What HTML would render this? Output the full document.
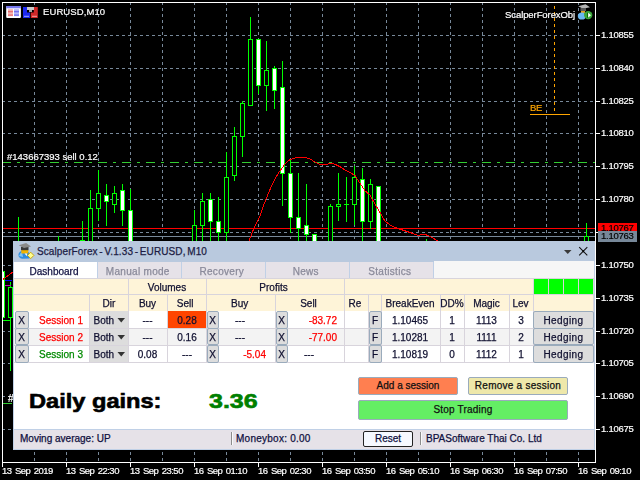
<!DOCTYPE html>
<html><head><meta charset="utf-8">
<style>
html,body{margin:0;padding:0;background:#000;width:640px;height:480px;overflow:hidden;}
body{position:relative;font-family:"Liberation Sans",sans-serif;}
svg{position:absolute;left:0;top:0;}
.ct{position:absolute;white-space:nowrap;line-height:12px;will-change:transform;-webkit-text-stroke:0.2px currentColor;}
.p{position:absolute;}
.tx{position:absolute;white-space:nowrap;font-size:10px;line-height:12px;color:#101030;-webkit-text-stroke:0.25px currentColor;}
</style></head><body>
<svg width="640" height="480" viewBox="0 0 640 480" shape-rendering="crispEdges">
<defs><clipPath id="cc"><rect x="3" y="3" width="592" height="459"/></clipPath></defs><g clip-path="url(#cc)">
<line x1="2" y1="35.5" x2="595" y2="35.5" stroke="#778899" stroke-width="1" stroke-dasharray="3 3"/>
<line x1="2" y1="68.5" x2="595" y2="68.5" stroke="#778899" stroke-width="1" stroke-dasharray="3 3"/>
<line x1="2" y1="101.5" x2="595" y2="101.5" stroke="#778899" stroke-width="1" stroke-dasharray="3 3"/>
<line x1="2" y1="133.5" x2="595" y2="133.5" stroke="#778899" stroke-width="1" stroke-dasharray="3 3"/>
<line x1="2" y1="166.5" x2="595" y2="166.5" stroke="#778899" stroke-width="1" stroke-dasharray="3 3"/>
<line x1="2" y1="199.5" x2="595" y2="199.5" stroke="#778899" stroke-width="1" stroke-dasharray="3 3"/>
<line x1="2" y1="232.5" x2="595" y2="232.5" stroke="#778899" stroke-width="1" stroke-dasharray="3 3"/>
<line x1="2" y1="265.5" x2="595" y2="265.5" stroke="#778899" stroke-width="1" stroke-dasharray="3 3"/>
<line x1="2" y1="298.5" x2="595" y2="298.5" stroke="#778899" stroke-width="1" stroke-dasharray="3 3"/>
<line x1="2" y1="331.5" x2="595" y2="331.5" stroke="#778899" stroke-width="1" stroke-dasharray="3 3"/>
<line x1="2" y1="363.5" x2="595" y2="363.5" stroke="#778899" stroke-width="1" stroke-dasharray="3 3"/>
<line x1="2" y1="396.5" x2="595" y2="396.5" stroke="#778899" stroke-width="1" stroke-dasharray="3 3"/>
<line x1="2" y1="429.5" x2="595" y2="429.5" stroke="#778899" stroke-width="1" stroke-dasharray="3 3"/>
<line x1="34.5" y1="2" x2="34.5" y2="462" stroke="#778899" stroke-width="1" stroke-dasharray="3 3"/>
<line x1="66.5" y1="2" x2="66.5" y2="462" stroke="#778899" stroke-width="1" stroke-dasharray="3 3"/>
<line x1="98.5" y1="2" x2="98.5" y2="462" stroke="#778899" stroke-width="1" stroke-dasharray="3 3"/>
<line x1="130.5" y1="2" x2="130.5" y2="462" stroke="#778899" stroke-width="1" stroke-dasharray="3 3"/>
<line x1="162.5" y1="2" x2="162.5" y2="462" stroke="#778899" stroke-width="1" stroke-dasharray="3 3"/>
<line x1="194.5" y1="2" x2="194.5" y2="462" stroke="#778899" stroke-width="1" stroke-dasharray="3 3"/>
<line x1="226.5" y1="2" x2="226.5" y2="462" stroke="#778899" stroke-width="1" stroke-dasharray="3 3"/>
<line x1="258.5" y1="2" x2="258.5" y2="462" stroke="#778899" stroke-width="1" stroke-dasharray="3 3"/>
<line x1="290.5" y1="2" x2="290.5" y2="462" stroke="#778899" stroke-width="1" stroke-dasharray="3 3"/>
<line x1="322.5" y1="2" x2="322.5" y2="462" stroke="#778899" stroke-width="1" stroke-dasharray="3 3"/>
<line x1="354.5" y1="2" x2="354.5" y2="462" stroke="#778899" stroke-width="1" stroke-dasharray="3 3"/>
<line x1="386.5" y1="2" x2="386.5" y2="462" stroke="#778899" stroke-width="1" stroke-dasharray="3 3"/>
<line x1="418.5" y1="2" x2="418.5" y2="462" stroke="#778899" stroke-width="1" stroke-dasharray="3 3"/>
<line x1="450.5" y1="2" x2="450.5" y2="462" stroke="#778899" stroke-width="1" stroke-dasharray="3 3"/>
<line x1="482.5" y1="2" x2="482.5" y2="462" stroke="#778899" stroke-width="1" stroke-dasharray="3 3"/>
<line x1="514.5" y1="2" x2="514.5" y2="462" stroke="#778899" stroke-width="1" stroke-dasharray="3 3"/>
<line x1="546.5" y1="2" x2="546.5" y2="462" stroke="#778899" stroke-width="1" stroke-dasharray="3 3"/>
<line x1="578.5" y1="2" x2="578.5" y2="462" stroke="#778899" stroke-width="1" stroke-dasharray="3 3"/>
<rect x="3" y="228" width="592" height="1" fill="#ff0000"/>
<rect x="3" y="236" width="592" height="1" fill="#778899"/>
<line x1="2" y1="162.5" x2="595" y2="162.5" stroke="#32cd32" stroke-width="1" stroke-dasharray="9 6 3 6"/>
<rect x="3" y="403" width="9" height="1" fill="#32cd32"/>
<rect x="530" y="114" width="40" height="1" fill="#ffa500"/>
<line x1="554.5" y1="6" x2="554.5" y2="111" stroke="#ffa500" stroke-width="1" stroke-dasharray="3 3"/>
<rect x="2" y="271" width="1" height="47" fill="#00ff00"/>
<rect x="0" y="271" width="5" height="47" fill="#00ff00"/>
<rect x="1" y="272" width="3" height="45" fill="#ffffff"/>
<rect x="10" y="282" width="1" height="89" fill="#00ff00"/>
<rect x="8" y="287" width="5" height="31" fill="#00ff00"/>
<rect x="9" y="288" width="3" height="29" fill="#000000"/>
<rect x="18" y="217" width="1" height="83" fill="#00ff00"/>
<rect x="58" y="236" width="1" height="64" fill="#00ff00"/>
<rect x="82" y="221" width="1" height="80" fill="#00ff00"/>
<rect x="80" y="240" width="5" height="61" fill="#00ff00"/>
<rect x="81" y="241" width="3" height="59" fill="#000000"/>
<rect x="90" y="190" width="1" height="111" fill="#00ff00"/>
<rect x="88" y="208" width="5" height="93" fill="#00ff00"/>
<rect x="89" y="209" width="3" height="91" fill="#000000"/>
<rect x="98" y="170" width="1" height="51" fill="#00ff00"/>
<rect x="96" y="193" width="5" height="16" fill="#00ff00"/>
<rect x="97" y="194" width="3" height="14" fill="#000000"/>
<rect x="106" y="184" width="1" height="42" fill="#00ff00"/>
<rect x="104" y="195" width="5" height="7" fill="#00ff00"/>
<rect x="105" y="196" width="3" height="5" fill="#ffffff"/>
<rect x="114" y="186" width="1" height="27" fill="#00ff00"/>
<rect x="112" y="193" width="5" height="12" fill="#00ff00"/>
<rect x="113" y="194" width="3" height="10" fill="#000000"/>
<rect x="122" y="184" width="1" height="42" fill="#00ff00"/>
<rect x="120" y="190" width="5" height="21" fill="#00ff00"/>
<rect x="121" y="191" width="3" height="19" fill="#ffffff"/>
<rect x="130" y="189" width="1" height="112" fill="#00ff00"/>
<rect x="128" y="210" width="5" height="91" fill="#00ff00"/>
<rect x="129" y="211" width="3" height="89" fill="#ffffff"/>
<rect x="194" y="210" width="1" height="91" fill="#00ff00"/>
<rect x="192" y="225" width="5" height="76" fill="#00ff00"/>
<rect x="193" y="226" width="3" height="74" fill="#000000"/>
<rect x="202" y="193" width="1" height="108" fill="#00ff00"/>
<rect x="200" y="201" width="5" height="25" fill="#00ff00"/>
<rect x="201" y="202" width="3" height="23" fill="#000000"/>
<rect x="210" y="193" width="1" height="108" fill="#00ff00"/>
<rect x="208" y="199" width="5" height="23" fill="#00ff00"/>
<rect x="209" y="200" width="3" height="21" fill="#ffffff"/>
<rect x="218" y="197" width="1" height="104" fill="#00ff00"/>
<rect x="216" y="221" width="5" height="12" fill="#00ff00"/>
<rect x="217" y="222" width="3" height="10" fill="#ffffff"/>
<rect x="226" y="152" width="1" height="149" fill="#00ff00"/>
<rect x="224" y="177" width="5" height="56" fill="#00ff00"/>
<rect x="225" y="178" width="3" height="54" fill="#000000"/>
<rect x="234" y="127" width="1" height="54" fill="#00ff00"/>
<rect x="232" y="136" width="5" height="40" fill="#00ff00"/>
<rect x="233" y="137" width="3" height="38" fill="#000000"/>
<rect x="242" y="101" width="1" height="56" fill="#00ff00"/>
<rect x="240" y="103" width="5" height="34" fill="#00ff00"/>
<rect x="241" y="104" width="3" height="32" fill="#000000"/>
<rect x="250" y="17" width="1" height="89" fill="#00ff00"/>
<rect x="248" y="39" width="5" height="67" fill="#00ff00"/>
<rect x="249" y="40" width="3" height="65" fill="#000000"/>
<rect x="258" y="39" width="1" height="55" fill="#00ff00"/>
<rect x="256" y="39" width="5" height="47" fill="#00ff00"/>
<rect x="257" y="40" width="3" height="45" fill="#ffffff"/>
<rect x="266" y="41" width="1" height="70" fill="#00ff00"/>
<rect x="264" y="70" width="5" height="16" fill="#00ff00"/>
<rect x="265" y="71" width="3" height="14" fill="#000000"/>
<rect x="274" y="66" width="1" height="43" fill="#00ff00"/>
<rect x="272" y="68" width="5" height="23" fill="#00ff00"/>
<rect x="273" y="69" width="3" height="21" fill="#ffffff"/>
<rect x="282" y="61" width="1" height="145" fill="#00ff00"/>
<rect x="280" y="87" width="5" height="87" fill="#00ff00"/>
<rect x="281" y="88" width="3" height="85" fill="#ffffff"/>
<rect x="290" y="160" width="1" height="73" fill="#00ff00"/>
<rect x="288" y="173" width="5" height="45" fill="#00ff00"/>
<rect x="289" y="174" width="3" height="43" fill="#ffffff"/>
<rect x="298" y="173" width="1" height="128" fill="#00ff00"/>
<rect x="296" y="217" width="5" height="12" fill="#00ff00"/>
<rect x="297" y="218" width="3" height="10" fill="#ffffff"/>
<rect x="306" y="184" width="1" height="117" fill="#00ff00"/>
<rect x="304" y="225" width="5" height="10" fill="#00ff00"/>
<rect x="305" y="226" width="3" height="8" fill="#ffffff"/>
<rect x="314" y="234" width="1" height="67" fill="#00ff00"/>
<rect x="312" y="234" width="5" height="67" fill="#00ff00"/>
<rect x="313" y="235" width="3" height="65" fill="#ffffff"/>
<rect x="330" y="204" width="1" height="97" fill="#00ff00"/>
<rect x="328" y="206" width="5" height="95" fill="#00ff00"/>
<rect x="329" y="207" width="3" height="93" fill="#000000"/>
<rect x="338" y="173" width="1" height="48" fill="#00ff00"/>
<rect x="336" y="204" width="5" height="3" fill="#00ff00"/>
<rect x="337" y="205" width="3" height="1" fill="#000000"/>
<rect x="346" y="177" width="1" height="45" fill="#00ff00"/>
<rect x="344" y="204" width="5" height="1" fill="#00ff00"/>
<rect x="354" y="166" width="1" height="59" fill="#00ff00"/>
<rect x="352" y="177" width="5" height="28" fill="#00ff00"/>
<rect x="353" y="178" width="3" height="26" fill="#000000"/>
<rect x="362" y="168" width="1" height="133" fill="#00ff00"/>
<rect x="360" y="179" width="5" height="43" fill="#00ff00"/>
<rect x="361" y="180" width="3" height="41" fill="#ffffff"/>
<rect x="370" y="179" width="1" height="50" fill="#00ff00"/>
<rect x="368" y="184" width="5" height="38" fill="#00ff00"/>
<rect x="369" y="185" width="3" height="36" fill="#000000"/>
<rect x="378" y="186" width="1" height="115" fill="#00ff00"/>
<rect x="376" y="186" width="5" height="115" fill="#00ff00"/>
<rect x="377" y="187" width="3" height="113" fill="#ffffff"/>
<rect x="426" y="239" width="1" height="61" fill="#00ff00"/>
<rect x="586" y="223" width="1" height="78" fill="#00ff00"/>
<rect x="584" y="236" width="5" height="65" fill="#00ff00"/>
<rect x="585" y="237" width="3" height="63" fill="#000000"/>
<polyline points="249,241 254,228 260,215.7 264.5,203 269.3,191 274.8,179.3 279.6,171.3 285,164 290,159.5 295,158 300,157.5 305,157.5 310,159 315,162 320,164.5 325,165 330,163.5 335,164.2 340,166.7 345,170 350,172.4 355,175.6 360,183.2 365,190.8 370,195.1 375,204 380,212.6 385,221.1 390,224.9 395,227.3 400,229.2 410,232.5 418,235.3 425,234.4 430,236.3 437,240.4 440,243" fill="none" stroke="#ff0000" stroke-width="1" shape-rendering="crispEdges"/>
<polyline points="3,279.5 13,272" fill="none" stroke="#ff0000" stroke-width="1" shape-rendering="crispEdges"/>
<rect x="5" y="280" width="7" height="1" fill="#0000ff"/>
<rect x="5" y="285" width="6" height="1" fill="#c000c0"/>
<rect x="3" y="320" width="8" height="1" fill="#00ff00"/>
</g>
<rect x="2" y="2" width="594" height="1" fill="#ffffff"/>
<rect x="2" y="2" width="1" height="461" fill="#ffffff"/>
<rect x="595" y="2" width="1" height="461" fill="#ffffff"/>
<rect x="2" y="462" width="594" height="1" fill="#ffffff"/>
<rect x="596" y="35" width="4" height="1" fill="#ffffff"/>
<rect x="596" y="68" width="4" height="1" fill="#ffffff"/>
<rect x="596" y="101" width="4" height="1" fill="#ffffff"/>
<rect x="596" y="133" width="4" height="1" fill="#ffffff"/>
<rect x="596" y="166" width="4" height="1" fill="#ffffff"/>
<rect x="596" y="199" width="4" height="1" fill="#ffffff"/>
<rect x="596" y="232" width="4" height="1" fill="#ffffff"/>
<rect x="596" y="265" width="4" height="1" fill="#ffffff"/>
<rect x="596" y="298" width="4" height="1" fill="#ffffff"/>
<rect x="596" y="331" width="4" height="1" fill="#ffffff"/>
<rect x="596" y="363" width="4" height="1" fill="#ffffff"/>
<rect x="596" y="396" width="4" height="1" fill="#ffffff"/>
<rect x="596" y="429" width="4" height="1" fill="#ffffff"/>
<rect x="2" y="463" width="1" height="4" fill="#ffffff"/>
<rect x="66" y="463" width="1" height="4" fill="#ffffff"/>
<rect x="130" y="463" width="1" height="4" fill="#ffffff"/>
<rect x="194" y="463" width="1" height="4" fill="#ffffff"/>
<rect x="258" y="463" width="1" height="4" fill="#ffffff"/>
<rect x="322" y="463" width="1" height="4" fill="#ffffff"/>
<rect x="386" y="463" width="1" height="4" fill="#ffffff"/>
<rect x="450" y="463" width="1" height="4" fill="#ffffff"/>
<rect x="514" y="463" width="1" height="4" fill="#ffffff"/>
<rect x="578" y="463" width="1" height="4" fill="#ffffff"/>
<rect x="598" y="223" width="39" height="8" fill="#ff0000"/>
<rect x="598" y="231" width="39" height="11" fill="#778899"/>
<g shape-rendering="auto">
<rect x="6.2" y="6" width="14.7" height="12" fill="#ffffff" rx="1"/>
<rect x="6.2" y="6" width="14.7" height="2.3" fill="#7878ee"/>
<rect x="8" y="9.6" width="5" height="0.9" fill="#e86060"/>
<rect x="14" y="9.6" width="5" height="0.9" fill="#6060f0"/>
<rect x="8" y="11.0" width="5" height="0.9" fill="#e86060"/>
<rect x="14" y="11.0" width="5" height="0.9" fill="#6060f0"/>
<rect x="8" y="12.399999999999999" width="5" height="0.9" fill="#e86060"/>
<rect x="14" y="12.399999999999999" width="5" height="0.9" fill="#6060f0"/>
<rect x="8" y="13.799999999999999" width="5" height="0.9" fill="#e86060"/>
<rect x="14" y="13.799999999999999" width="5" height="0.9" fill="#6060f0"/>
<rect x="8" y="15.2" width="5" height="0.9" fill="#e86060"/>
<rect x="14" y="15.2" width="5" height="0.9" fill="#6060f0"/>
<path d="M23 7 h4 v5.5 h3 v5.5 h-7z" fill="#1c28f0"/>
<path d="M37.8 7 h-4 v5.5 h-3 v5.5 h7z" fill="#d02828"/>
<rect x="27" y="7" width="7" height="3" fill="#c8c8c8"/>
<rect x="29" y="10" width="3" height="2" fill="#a8a8a8"/>
<rect x="24" y="15.8" width="5" height="1" fill="#9aa8ff"/>
<rect x="32" y="15.8" width="5" height="1" fill="#f0a0a0"/>
</g>
<g shape-rendering="auto">
<path d="M578.2 6.2 L585.5 4.3 L590 7.3 L583 8.8Z" fill="#b4b4b4"/>
<rect x="580.5" y="8" width="5.5" height="3" fill="#5a5a5a"/>
<rect x="581" y="11" width="4" height="2.2" fill="#e0a020"/>
<ellipse cx="581.8" cy="16" rx="4" ry="3.6" fill="#6ab8f0"/>
<circle cx="588.2" cy="15.1" r="4.2" fill="#3aa83a"/>
<rect x="587" y="12.8" width="1" height="5" fill="#0a6a0a"/>
<path d="M588.2 12.8 L591 15.2 L588.2 17.6Z" fill="#ffffff"/>
</g>
</svg>
<div class="ct" style="left:601px;top:29px;color:#fff;font-size:9.5px;letter-spacing:-0.25px;">1.10855</div>
<div class="ct" style="left:601px;top:62px;color:#fff;font-size:9.5px;letter-spacing:-0.25px;">1.10840</div>
<div class="ct" style="left:601px;top:95px;color:#fff;font-size:9.5px;letter-spacing:-0.25px;">1.10825</div>
<div class="ct" style="left:601px;top:127px;color:#fff;font-size:9.5px;letter-spacing:-0.25px;">1.10810</div>
<div class="ct" style="left:601px;top:160px;color:#fff;font-size:9.5px;letter-spacing:-0.25px;">1.10795</div>
<div class="ct" style="left:601px;top:193px;color:#fff;font-size:9.5px;letter-spacing:-0.25px;">1.10780</div>
<div class="ct" style="left:601px;top:259px;color:#fff;font-size:9.5px;letter-spacing:-0.25px;">1.10750</div>
<div class="ct" style="left:601px;top:292px;color:#fff;font-size:9.5px;letter-spacing:-0.25px;">1.10735</div>
<div class="ct" style="left:601px;top:325px;color:#fff;font-size:9.5px;letter-spacing:-0.25px;">1.10720</div>
<div class="ct" style="left:601px;top:357px;color:#fff;font-size:9.5px;letter-spacing:-0.25px;">1.10705</div>
<div class="ct" style="left:601px;top:390px;color:#fff;font-size:9.5px;letter-spacing:-0.25px;">1.10690</div>
<div class="ct" style="left:601px;top:423px;color:#fff;font-size:9.5px;letter-spacing:-0.25px;">1.10675</div>
<div class="ct" style="left:601px;top:222px;color:#000;font-size:9.5px;letter-spacing:-0.25px;">1.10767</div>
<div class="ct" style="left:601px;top:230px;color:#000;font-size:9.5px;letter-spacing:-0.25px;">1.10763</div>
<div class="ct" style="left:2px;top:465px;color:#fff;font-size:9.5px;letter-spacing:-0.5px;word-spacing:1.2px;">13 Sep 2019</div>
<div class="ct" style="left:66px;top:465px;color:#fff;font-size:9.5px;letter-spacing:-0.5px;word-spacing:1.2px;">13 Sep 22:30</div>
<div class="ct" style="left:130px;top:465px;color:#fff;font-size:9.5px;letter-spacing:-0.5px;word-spacing:1.2px;">13 Sep 23:50</div>
<div class="ct" style="left:194px;top:465px;color:#fff;font-size:9.5px;letter-spacing:-0.5px;word-spacing:1.2px;">16 Sep 01:10</div>
<div class="ct" style="left:258px;top:465px;color:#fff;font-size:9.5px;letter-spacing:-0.5px;word-spacing:1.2px;">16 Sep 02:30</div>
<div class="ct" style="left:322px;top:465px;color:#fff;font-size:9.5px;letter-spacing:-0.5px;word-spacing:1.2px;">16 Sep 03:50</div>
<div class="ct" style="left:386px;top:465px;color:#fff;font-size:9.5px;letter-spacing:-0.5px;word-spacing:1.2px;">16 Sep 05:10</div>
<div class="ct" style="left:450px;top:465px;color:#fff;font-size:9.5px;letter-spacing:-0.5px;word-spacing:1.2px;">16 Sep 06:30</div>
<div class="ct" style="left:514px;top:465px;color:#fff;font-size:9.5px;letter-spacing:-0.5px;word-spacing:1.2px;">16 Sep 07:50</div>
<div class="ct" style="left:578px;top:465px;color:#fff;font-size:9.5px;letter-spacing:-0.5px;word-spacing:1.2px;">16 Sep 09:10</div>
<div class="ct" style="left:43px;top:6px;color:#fff;font-size:9.5px;letter-spacing:0.1px;">EURUSD,M10</div>
<div class="ct" style="left:7px;top:150.5px;color:#fff;font-size:9.5px;letter-spacing:0px;">#143667393 sell 0.12</div>
<div class="ct" style="left:505px;top:8.5px;color:#fff;font-size:9.5px;letter-spacing:-0.08px;">ScalperForexObj</div>
<div class="ct" style="left:530px;top:101.5px;color:#ffa500;font-size:9.5px;letter-spacing:-0.35px;">BE</div>
<div class="ct" style="left:8px;top:393px;color:#fff;font-size:10px;letter-spacing:0px;">#</div>
<div class="p" style="left:13px;top:241px;width:582px;height:209px;background:#fff;"></div>
<div class="p" style="left:13px;top:241px;width:1px;height:209px;background:#c0d0e6;"></div>
<div class="p" style="left:594px;top:241px;width:1px;height:209px;background:#c0d0e6;"></div>
<div class="p" style="left:13px;top:449px;width:582px;height:1px;background:#c0d0e6;"></div>
<div class="p" style="left:13px;top:241px;width:582px;height:21px;background:#b9c9de;"></div>
<svg class="p" style="left:14px;top:241px" width="24" height="20" viewBox="0 0 24 20" shape-rendering="auto">
<path d="M4.5 14.5 Q4 11.5 7.5 10 L14.5 11 Q16.5 13 15.5 17.5 L8 17.8 Q4.8 17 4.5 14.5Z" fill="#2f8de0"/>
<path d="M5 15 Q6 12 8 11 L9 16Z" fill="#7cc4f5"/>
<rect x="7.3" y="9" width="7" height="3.5" fill="#f2b400"/>
<path d="M10.6 12.4 L13 12.4 L12.8 15.2 Z" fill="#ffffff"/>
<rect x="7" y="5.8" width="7.5" height="3.4" fill="#3a3a3a"/>
<path d="M4.8 4.2 L12.1 1.9 L17.1 5.4 L10 6.9Z" fill="#8a8a8a"/>
<path d="M16.7 11.2 L19.9 14.4 L16.7 17.6 L13.5 14.4Z" fill="#ffff90" stroke="#c8a000" stroke-width="0.9"/>
</svg>
<div class="tx" style="left:37px;top:245.5px;color:#1c1c44;letter-spacing:0.1px;word-spacing:-1.2px;">ScalperForex - V.1.33 - EURUSD, M10</div>
<svg class="p" style="left:560px;top:244px" width="32" height="14" viewBox="0 0 32 14" shape-rendering="auto"><path d="M4 6 L11.5 6 L7.75 10Z" fill="#3a3a3a"/><path d="M19.2 3.2 L27.3 11.3 M27.3 3.2 L19.2 11.3" stroke="#111" stroke-width="1.05"/><circle cx="23.25" cy="7.25" r="0.9" fill="#000"/></svg>
<div class="p" style="left:434px;top:261px;width:160px;height:17px;background:#f6f6f6;"></div>
<div class="p" style="left:14px;top:262px;width:83px;height:16px;background:#fff;"></div>
<div class="p" style="left:98px;top:262px;width:83px;height:16px;background:#e6e2e8;"></div>
<div class="p" style="left:182px;top:262px;width:83px;height:16px;background:#e6e2e8;"></div>
<div class="p" style="left:266px;top:262px;width:83px;height:16px;background:#e6e2e8;"></div>
<div class="p" style="left:350px;top:262px;width:83px;height:16px;background:#e6e2e8;"></div>
<div class="p" style="left:97px;top:262px;width:1px;height:16px;background:#c0d0e6;"></div>
<div class="p" style="left:181px;top:262px;width:1px;height:16px;background:#c0d0e6;"></div>
<div class="p" style="left:265px;top:262px;width:1px;height:16px;background:#c0d0e6;"></div>
<div class="p" style="left:349px;top:262px;width:1px;height:16px;background:#c0d0e6;"></div>
<div class="p" style="left:433px;top:262px;width:1px;height:16px;background:#c0d0e6;"></div>
<div class="p" style="left:14px;top:278px;width:580px;height:1px;background:#d8d4dc;"></div>
<div class="tx" style="left:4.0px;top:266.0px;width:100px;text-align:center;color:#101040;">Dashboard</div>
<div class="tx" style="left:87.80000000000001px;top:266.0px;width:100px;text-align:center;color:#8a8a9a;letter-spacing:0.3px;">Manual mode</div>
<div class="tx" style="left:171.8px;top:266.0px;width:100px;text-align:center;color:#8a8a9a;letter-spacing:0.3px;">Recovery</div>
<div class="tx" style="left:255.8px;top:266.0px;width:100px;text-align:center;color:#8a8a9a;letter-spacing:0.3px;">News</div>
<div class="tx" style="left:339.8px;top:266.0px;width:100px;text-align:center;color:#8a8a9a;letter-spacing:0.3px;">Statistics</div>
<div class="p" style="left:14px;top:279px;width:580px;height:32px;background:#fef4d8;"></div>
<div class="p" style="left:14px;top:294px;width:580px;height:1px;background:#d8d4dc;"></div>
<div class="p" style="left:128px;top:279px;width:1px;height:15px;background:#d8d4dc;"></div>
<div class="p" style="left:206px;top:279px;width:1px;height:15px;background:#d8d4dc;"></div>
<div class="p" style="left:344px;top:279px;width:1px;height:15px;background:#d8d4dc;"></div>
<div class="p" style="left:533px;top:279px;width:1px;height:15px;background:#d8d4dc;"></div>
<div class="p" style="left:89px;top:295px;width:1px;height:16px;background:#d8d4dc;"></div>
<div class="p" style="left:128px;top:295px;width:1px;height:16px;background:#d8d4dc;"></div>
<div class="p" style="left:167px;top:295px;width:1px;height:16px;background:#d8d4dc;"></div>
<div class="p" style="left:206px;top:295px;width:1px;height:16px;background:#d8d4dc;"></div>
<div class="p" style="left:275px;top:295px;width:1px;height:16px;background:#d8d4dc;"></div>
<div class="p" style="left:344px;top:295px;width:1px;height:16px;background:#d8d4dc;"></div>
<div class="p" style="left:368px;top:295px;width:1px;height:16px;background:#d8d4dc;"></div>
<div class="p" style="left:381px;top:295px;width:1px;height:16px;background:#d8d4dc;"></div>
<div class="p" style="left:440px;top:295px;width:1px;height:16px;background:#d8d4dc;"></div>
<div class="p" style="left:464px;top:295px;width:1px;height:16px;background:#d8d4dc;"></div>
<div class="p" style="left:509px;top:295px;width:1px;height:16px;background:#d8d4dc;"></div>
<div class="p" style="left:533px;top:295px;width:1px;height:16px;background:#d8d4dc;"></div>
<div class="p" style="left:593px;top:279px;width:1px;height:84px;background:#d8d4dc;"></div>
<div class="p" style="left:534px;top:279px;width:59px;height:15px;background:#d8d4dc;"></div>
<div class="p" style="left:534px;top:279px;width:14px;height:15px;background:#00ff00;"></div>
<div class="p" style="left:549px;top:279px;width:14px;height:15px;background:#00ff00;"></div>
<div class="p" style="left:564px;top:279px;width:14px;height:15px;background:#00ff00;"></div>
<div class="p" style="left:579px;top:279px;width:14px;height:15px;background:#00ff00;"></div>
<div class="tx" style="left:117.0px;top:281.5px;width:100px;text-align:center;color:#101030;">Volumes</div>
<div class="tx" style="left:223.5px;top:281.5px;width:100px;text-align:center;color:#101030;">Profits</div>
<div class="tx" style="left:59.0px;top:297.5px;width:100px;text-align:center;color:#101030;">Dir</div>
<div class="tx" style="left:97.5px;top:297.5px;width:100px;text-align:center;color:#101030;">Buy</div>
<div class="tx" style="left:135.2px;top:297.5px;width:100px;text-align:center;color:#101030;">Sell</div>
<div class="tx" style="left:189.6px;top:297.5px;width:100px;text-align:center;color:#101030;">Buy</div>
<div class="tx" style="left:258.5px;top:297.5px;width:100px;text-align:center;color:#101030;">Sell</div>
<div class="tx" style="left:305.0px;top:297.5px;width:100px;text-align:center;color:#101030;">Re</div>
<div class="tx" style="left:360.0px;top:297.5px;width:100px;text-align:center;color:#101030;">BreakEven</div>
<div class="tx" style="left:402.0px;top:297.5px;width:100px;text-align:center;color:#101030;">DD%</div>
<div class="tx" style="left:436.5px;top:297.5px;width:100px;text-align:center;color:#101030;">Magic</div>
<div class="tx" style="left:470.5px;top:297.5px;width:100px;text-align:center;color:#101030;">Lev</div>
<div class="p" style="left:14px;top:328px;width:580px;height:17px;background:#f3f3f3;"></div>
<div class="p" style="left:14px;top:328px;width:580px;height:1px;background:#d8d4dc;"></div>
<div class="p" style="left:14px;top:345px;width:580px;height:1px;background:#d8d4dc;"></div>
<div class="p" style="left:14px;top:362px;width:580px;height:1px;background:#d8d4dc;"></div>
<div class="p" style="left:89px;top:311px;width:1px;height:52px;background:#d8d4dc;"></div>
<div class="p" style="left:128px;top:311px;width:1px;height:52px;background:#d8d4dc;"></div>
<div class="p" style="left:167px;top:311px;width:1px;height:52px;background:#d8d4dc;"></div>
<div class="p" style="left:206px;top:311px;width:1px;height:52px;background:#d8d4dc;"></div>
<div class="p" style="left:275px;top:311px;width:1px;height:52px;background:#d8d4dc;"></div>
<div class="p" style="left:344px;top:311px;width:1px;height:52px;background:#d8d4dc;"></div>
<div class="p" style="left:368px;top:311px;width:1px;height:52px;background:#d8d4dc;"></div>
<div class="p" style="left:381px;top:311px;width:1px;height:52px;background:#d8d4dc;"></div>
<div class="p" style="left:440px;top:311px;width:1px;height:52px;background:#d8d4dc;"></div>
<div class="p" style="left:464px;top:311px;width:1px;height:52px;background:#d8d4dc;"></div>
<div class="p" style="left:509px;top:311px;width:1px;height:52px;background:#d8d4dc;"></div>
<div class="p" style="left:533px;top:311px;width:1px;height:52px;background:#d8d4dc;"></div>
<div class="p" style="left:90px;top:311px;width:38px;height:51px;background:#dddddd;"></div>
<div class="p" style="left:90px;top:328px;width:38px;height:1px;background:#d8d4dc;"></div>
<div class="p" style="left:90px;top:345px;width:38px;height:1px;background:#d8d4dc;"></div>
<div class="p" style="left:168px;top:311px;width:38px;height:17px;background:#ff4500;"></div>
<div class="p" style="left:15px;top:311px;width:12px;height:16px;background:#dddddd;border:1px solid #9aabbc;border-radius:2px;"></div>
<div class="tx" style="left:-28.5px;top:314.5px;width:100px;text-align:center;color:#101030;">X</div>
<div class="tx" style="left:-17px;top:314.5px;width:100px;text-align:right;color:#ff0000;">Session 1</div>
<div class="tx" style="left:93.5px;top:314.5px;color:#101030;">Both</div>
<svg class="p" style="left:117px;top:318px" width="9" height="5"><path d="M0.5 0 L8 0 L4.25 4.5Z" fill="#333"/></svg>
<div class="tx" style="left:97.5px;top:314.5px;width:100px;text-align:center;color:#101030;">---</div>
<div class="tx" style="left:137.0px;top:314.5px;width:100px;text-align:center;color:#101030;">0.28</div>
<div class="p" style="left:207px;top:311px;width:10px;height:16px;background:#dddddd;border:1px solid #9aabbc;border-radius:2px;"></div>
<div class="tx" style="left:162.5px;top:314.5px;width:100px;text-align:center;color:#101030;">X</div>
<div class="tx" style="left:190.0px;top:314.5px;width:100px;text-align:center;color:#101030;">---</div>
<div class="p" style="left:276px;top:311px;width:10px;height:16px;background:#dddddd;border:1px solid #9aabbc;border-radius:2px;"></div>
<div class="tx" style="left:231.5px;top:314.5px;width:100px;text-align:center;color:#101030;">X</div>
<div class="tx" style="left:237px;top:314.5px;width:100px;text-align:right;color:#ff0000;">-83.72</div>
<div class="p" style="left:369px;top:311px;width:11px;height:16px;background:#dddddd;border:1px solid #9aabbc;border-radius:2px;"></div>
<div class="tx" style="left:325.0px;top:314.5px;width:100px;text-align:center;color:#101030;">F</div>
<div class="tx" style="left:360.0px;top:314.5px;width:100px;text-align:center;color:#101030;">1.10465</div>
<div class="tx" style="left:402.0px;top:314.5px;width:100px;text-align:center;color:#101030;">1</div>
<div class="tx" style="left:436.5px;top:314.5px;width:100px;text-align:center;color:#101030;">1113</div>
<div class="tx" style="left:471.0px;top:314.5px;width:100px;text-align:center;color:#101030;">3</div>
<div class="p" style="left:533px;top:311px;width:59px;height:16px;background:#dddddd;border:1px solid #9aabbc;border-radius:2px;"></div>
<div class="tx" style="left:513.5px;top:314.5px;width:100px;text-align:center;color:#101030;letter-spacing:0.4px;">Hedging</div>
<div class="p" style="left:15px;top:328px;width:12px;height:15px;background:#dddddd;border:1px solid #9aabbc;border-radius:2px;"></div>
<div class="tx" style="left:-28.5px;top:331.5px;width:100px;text-align:center;color:#101030;">X</div>
<div class="tx" style="left:-17px;top:331.5px;width:100px;text-align:right;color:#ff0000;">Session 2</div>
<div class="tx" style="left:93.5px;top:331.5px;color:#101030;">Both</div>
<svg class="p" style="left:117px;top:335px" width="9" height="5"><path d="M0.5 0 L8 0 L4.25 4.5Z" fill="#333"/></svg>
<div class="tx" style="left:97.5px;top:331.5px;width:100px;text-align:center;color:#101030;">---</div>
<div class="tx" style="left:137.0px;top:331.5px;width:100px;text-align:center;color:#101030;">0.16</div>
<div class="p" style="left:207px;top:328px;width:10px;height:15px;background:#dddddd;border:1px solid #9aabbc;border-radius:2px;"></div>
<div class="tx" style="left:162.5px;top:331.5px;width:100px;text-align:center;color:#101030;">X</div>
<div class="tx" style="left:190.0px;top:331.5px;width:100px;text-align:center;color:#101030;">---</div>
<div class="p" style="left:276px;top:328px;width:10px;height:15px;background:#dddddd;border:1px solid #9aabbc;border-radius:2px;"></div>
<div class="tx" style="left:231.5px;top:331.5px;width:100px;text-align:center;color:#101030;">X</div>
<div class="tx" style="left:237px;top:331.5px;width:100px;text-align:right;color:#ff0000;">-77.00</div>
<div class="p" style="left:369px;top:328px;width:11px;height:15px;background:#dddddd;border:1px solid #9aabbc;border-radius:2px;"></div>
<div class="tx" style="left:325.0px;top:331.5px;width:100px;text-align:center;color:#101030;">F</div>
<div class="tx" style="left:360.0px;top:331.5px;width:100px;text-align:center;color:#101030;">1.10281</div>
<div class="tx" style="left:402.0px;top:331.5px;width:100px;text-align:center;color:#101030;">1</div>
<div class="tx" style="left:436.5px;top:331.5px;width:100px;text-align:center;color:#101030;">1111</div>
<div class="tx" style="left:471.0px;top:331.5px;width:100px;text-align:center;color:#101030;">2</div>
<div class="p" style="left:533px;top:328px;width:59px;height:15px;background:#dddddd;border:1px solid #9aabbc;border-radius:2px;"></div>
<div class="tx" style="left:513.5px;top:331.5px;width:100px;text-align:center;color:#101030;letter-spacing:0.4px;">Hedging</div>
<div class="p" style="left:15px;top:345px;width:12px;height:16px;background:#dddddd;border:1px solid #9aabbc;border-radius:2px;"></div>
<div class="tx" style="left:-28.5px;top:348.5px;width:100px;text-align:center;color:#101030;">X</div>
<div class="tx" style="left:-17px;top:348.5px;width:100px;text-align:right;color:#008a00;">Session 3</div>
<div class="tx" style="left:93.5px;top:348.5px;color:#101030;">Both</div>
<svg class="p" style="left:117px;top:352px" width="9" height="5"><path d="M0.5 0 L8 0 L4.25 4.5Z" fill="#333"/></svg>
<div class="tx" style="left:97.5px;top:348.5px;width:100px;text-align:center;color:#101030;">0.08</div>
<div class="tx" style="left:137.0px;top:348.5px;width:100px;text-align:center;color:#101030;">---</div>
<div class="p" style="left:207px;top:345px;width:10px;height:16px;background:#dddddd;border:1px solid #9aabbc;border-radius:2px;"></div>
<div class="tx" style="left:162.5px;top:348.5px;width:100px;text-align:center;color:#101030;">X</div>
<div class="tx" style="left:166px;top:348.5px;width:100px;text-align:right;color:#ff0000;">-5.04</div>
<div class="p" style="left:276px;top:345px;width:10px;height:16px;background:#dddddd;border:1px solid #9aabbc;border-radius:2px;"></div>
<div class="tx" style="left:231.5px;top:348.5px;width:100px;text-align:center;color:#101030;">X</div>
<div class="tx" style="left:259.0px;top:348.5px;width:100px;text-align:center;color:#101030;">---</div>
<div class="p" style="left:369px;top:345px;width:11px;height:16px;background:#dddddd;border:1px solid #9aabbc;border-radius:2px;"></div>
<div class="tx" style="left:325.0px;top:348.5px;width:100px;text-align:center;color:#101030;">F</div>
<div class="tx" style="left:360.0px;top:348.5px;width:100px;text-align:center;color:#101030;">1.10819</div>
<div class="tx" style="left:402.0px;top:348.5px;width:100px;text-align:center;color:#101030;">0</div>
<div class="tx" style="left:436.5px;top:348.5px;width:100px;text-align:center;color:#101030;">1112</div>
<div class="tx" style="left:471.0px;top:348.5px;width:100px;text-align:center;color:#101030;">1</div>
<div class="p" style="left:533px;top:345px;width:59px;height:16px;background:#dddddd;border:1px solid #9aabbc;border-radius:2px;"></div>
<div class="tx" style="left:513.5px;top:348.5px;width:100px;text-align:center;color:#101030;letter-spacing:0.4px;">Hedging</div>
<div class="p" style="left:29px;top:389px;font-family:'Liberation Sans',sans-serif;font-weight:bold;font-size:20px;line-height:24px;color:#000;white-space:nowrap;transform:scaleX(1.18);transform-origin:0 0;-webkit-text-stroke:0.6px #000;">Daily gains:</div>
<div class="p" style="left:208.5px;top:389px;font-family:'Liberation Sans',sans-serif;font-weight:bold;font-size:20px;line-height:24px;color:#008000;white-space:nowrap;transform:scaleX(1.25);transform-origin:0 0;-webkit-text-stroke:0.6px #008000;">3.36</div>
<div class="p" style="left:358px;top:377px;width:98px;height:16px;background:#ff7f50;border:1px solid #9aabbc;border-radius:2px;"></div>
<div class="tx" style="left:358.0px;top:379.5px;width:100px;text-align:center;color:#101010;">Add a session</div>
<div class="p" style="left:468px;top:377px;width:98px;height:16px;background:#eee8aa;border:1px solid #9aabbc;border-radius:2px;"></div>
<div class="tx" style="left:468.0px;top:379.5px;width:100px;text-align:center;color:#101010;letter-spacing:0.25px;">Remove a session</div>
<div class="p" style="left:358px;top:400px;width:208px;height:18px;background:#64ee64;border:1px solid #9aabbc;border-radius:2px;"></div>
<div class="tx" style="left:413.0px;top:403.5px;width:100px;text-align:center;color:#101010;letter-spacing:0.2px;">Stop Trading</div>
<div class="p" style="left:14px;top:429px;width:580px;height:1px;background:#c0d0e6;"></div>
<div class="p" style="left:14px;top:430px;width:580px;height:19px;background:#e6e2e8;"></div>
<div class="tx" style="left:20px;top:432.5px;color:#101040;">Moving average: UP</div>
<div class="p" style="left:231px;top:432px;width:1px;height:13px;background:#8c8c8c;"></div>
<div class="p" style="left:232px;top:432px;width:1px;height:13px;background:#fafafa;"></div>
<div class="tx" style="left:236px;top:432.5px;color:#101040;letter-spacing:0.25px;">Moneybox: 0.00</div>
<div class="p" style="left:363px;top:431px;width:48px;height:14px;background:#f6f9ff;border:1px solid #222;border-radius:2px;"></div>
<div class="tx" style="left:338.0px;top:432.5px;width:100px;text-align:center;color:#101040;">Reset</div>
<div class="p" style="left:420px;top:432px;width:1px;height:13px;background:#8c8c8c;"></div>
<div class="p" style="left:421px;top:432px;width:1px;height:13px;background:#fafafa;"></div>
<div class="tx" style="left:426px;top:432.5px;color:#101040;">BPASoftware Thai Co. Ltd</div>
</body></html>
